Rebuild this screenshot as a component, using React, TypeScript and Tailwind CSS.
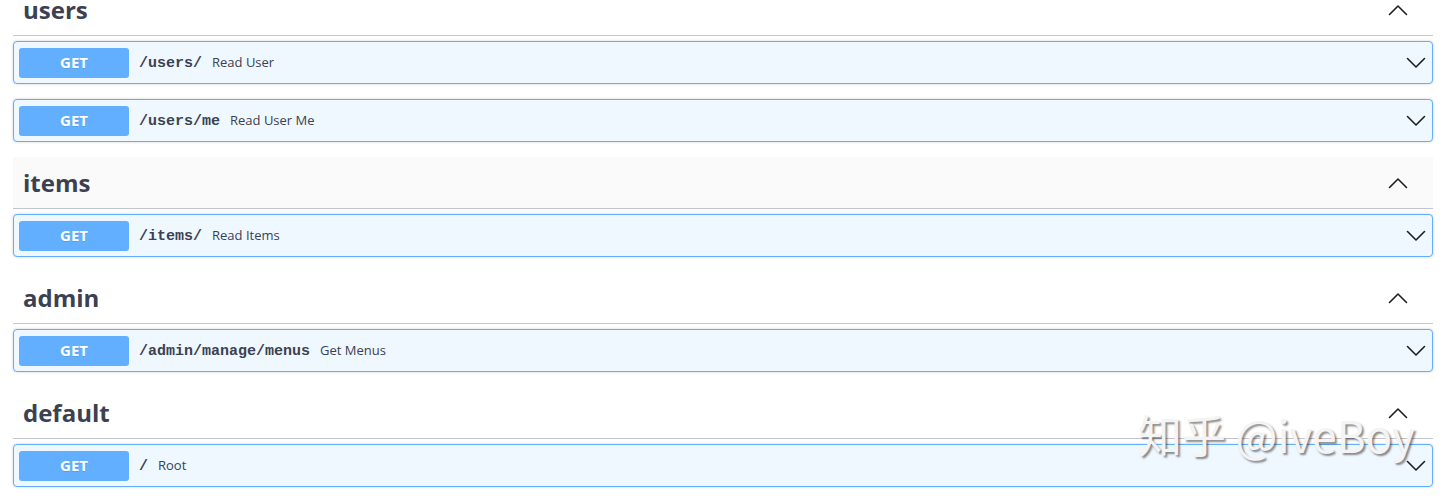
import React from "react";

type Op = { path: string; desc: string };
type Section = { tag: string; ops: Op[]; hover?: boolean };

const sections: Section[] = [
  { tag: "users", ops: [ { path: "/users/", desc: "Read User" }, { path: "/users/me", desc: "Read User Me" } ] },
  { tag: "items", ops: [ { path: "/items/", desc: "Read Items" } ], hover: true },
  { tag: "admin", ops: [ { path: "/admin/manage/menus", desc: "Get Menus" } ] },
  { tag: "default", ops: [ { path: "/", desc: "Root" } ] },
];

function ChevronUp() {
  return (
    <svg width="20" height="12" viewBox="0 0 20 12" fill="none">
      <path d="M1.5 10.5 L10 2 L18.5 10.5" stroke="#1f1f1f" strokeWidth="1.6" strokeLinecap="round" strokeLinejoin="round" />
    </svg>
  );
}

function ChevronDown() {
  return (
    <svg width="20" height="12" viewBox="0 0 20 12" fill="none">
      <path d="M1.5 1.5 L10 10 L18.5 1.5" stroke="#1f1f1f" strokeWidth="1.6" strokeLinecap="round" strokeLinejoin="round" />
    </svg>
  );
}

export default function App() {
  return (
    <div className="relative w-[1453px] h-[501px] overflow-hidden bg-white">
      <div className="pl-[13px] pr-[20px] mt-[-16px]">
        {sections.map((s) => (
          <div key={s.tag}>
            <div
              className={`h-[52px] flex items-center justify-between pl-[10px] pr-[25px] border-b border-[#c4c6cb] ${s.hover ? "bg-[#fafafa]" : ""}`}
            >
              <span className="text-[24px] font-bold text-[#3b4151] leading-none [font-family:'Open_Sans',sans-serif]">
                {s.tag}
              </span>
              <ChevronUp />
            </div>
            <div className="mt-[5px]">
              {s.ops.map((op) => (
                <div
                  key={op.path}
                  className="mb-[15px] h-[43px] border border-[#61affe] rounded-[4px] bg-[#eff7ff] shadow-[0_0_3px_rgba(0,0,0,0.19)] flex items-center pl-[5px] pr-[6px]"
                >
                  <div className="w-[110px] h-[30px] rounded-[3px] bg-[#61affe] flex items-center justify-center text-white text-[15px] font-bold [font-family:'Open_Sans',sans-serif] [text-shadow:0_1px_0_rgba(0,0,0,0.1)]">
                    GET
                  </div>
                  <div className="flex items-baseline">
                    <span className="pl-[10px] pr-[10px] text-[15px] leading-[20px] font-bold text-[#3b4151] [font-family:'Liberation_Mono',monospace]">
                      {op.path}
                    </span>
                    <span className="text-[13px] leading-[20px] text-[#3b4151] [font-family:'Open_Sans',sans-serif]">
                      {op.desc}
                    </span>
                  </div>
                  <div className="ml-auto">
                    <ChevronDown />
                  </div>
                </div>
              ))}
            </div>
          </div>
        ))}
      </div>
      <div className="absolute left-[1138px] top-[412px] text-[44px] leading-none text-[#f4f4f4] [font-family:'Noto_Sans_CJK_SC','Open_Sans',sans-serif] [text-shadow:2px_2px_2px_rgba(0,0,0,0.45)] whitespace-nowrap">
        知乎 @iveBoy
      </div>
    </div>
  );
}
